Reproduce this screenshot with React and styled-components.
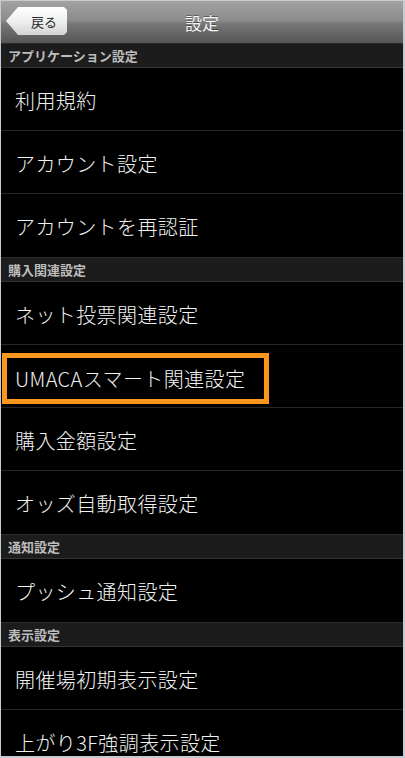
import React from 'react';
import styled, { createGlobalStyle } from 'styled-components';

const GlobalStyle = createGlobalStyle`
    html, body {
        margin: 0;
        padding: 0;
        background: #000;
    }
    * {
        box-sizing: border-box;
    }
`

const Frame = styled.div`
    width: 405px;
    height: 758px;
    overflow: hidden;
    background: #000;
    border-style: solid;
    border-color: #c6cad2;
    border-width: 1px 2px 2px 1px;
    font-family: "Noto Sans CJK JP", "Noto Sans", sans-serif;
`

const Header = styled.div`
    position: relative;
    height: 42px;
    display: flex;
    align-items: center;
    justify-content: center;
    background: linear-gradient(#a2a2a2 0%, #8c8c8c 45%, #767676 55%, #555555 100%);
`

const Title = styled.div`
    font-size: 17px;
    color: #f4f4f4;
    text-shadow: 0 -1px 0 rgba(0,0,0,0.35);
`

const BackButton = styled.div`
    position: absolute;
    left: 5px;
    top: 6px;
    width: 61px;
    height: 28px;
    display: flex;
    align-items: center;
    justify-content: flex-end;
    padding-right: 10px;
    font-size: 13px;
    color: #2a2a2a;
    background: linear-gradient(#ffffff 0%, #f0f0f0 50%, #d4d4d4 100%);
    clip-path: polygon(0 50%, 12px 0, calc(100% - 3px) 0, 100% 3px, 100% calc(100% - 3px), calc(100% - 3px) 100%, 12px 100%);
`

const SectionHeader = styled.div`
    height: 25px;
    display: flex;
    align-items: center;
    padding-left: 7px;
    background: #1c1c1c;
    border-top: 1px solid #2c2c2c;
    border-bottom: 1px solid #333;
    font-size: 13px;
    font-weight: bold;
    color: #bcbcbc;
`

const Row = styled.div`
    height: 63px;
    display: flex;
    align-items: center;
    padding-top: 2px;
    border-bottom: ${p => (p.last ? 'none' : '1px solid #262626')};
`

const Label = styled.div`
    font-size: 20px;
    font-weight: 300;
    letter-spacing: 0.4px;
    color: #f2f2f2;
    margin-left: ${p => (p.highlight ? '1px' : '14px')};
    ${p => p.highlight && `
        width: 267px;
        height: 51px;
        display: flex;
        align-items: center;
        padding-left: 8px;
        border: 5px solid #f8961d;
        margin-top: 2px;
    `}
`

const sections = [
    { title: 'アプリケーション設定', items: ['利用規約', 'アカウント設定', 'アカウントを再認証'] },
    { title: '購入関連設定', items: ['ネット投票関連設定', 'UMACAスマート関連設定', '購入金額設定', 'オッズ自動取得設定'] },
    { title: '通知設定', items: ['プッシュ通知設定'] },
    { title: '表示設定', items: ['開催場初期表示設定', '上がり3F強調表示設定'] },
];

const App = () => {
    return (
        <Frame>
            <GlobalStyle />
            <Header>
                <BackButton>戻る</BackButton>
                <Title>設定</Title>
            </Header>
            {sections.map(section => (
                <div key={section.title}>
                    <SectionHeader>{section.title}</SectionHeader>
                    {section.items.map((item, i) => (
                        <Row key={item} last={i === section.items.length - 1}>
                            <Label highlight={item.startsWith('UMACA')}>{item}</Label>
                        </Row>
                    ))}
                </div>
            ))}
        </Frame>
    )
}

export default App;
